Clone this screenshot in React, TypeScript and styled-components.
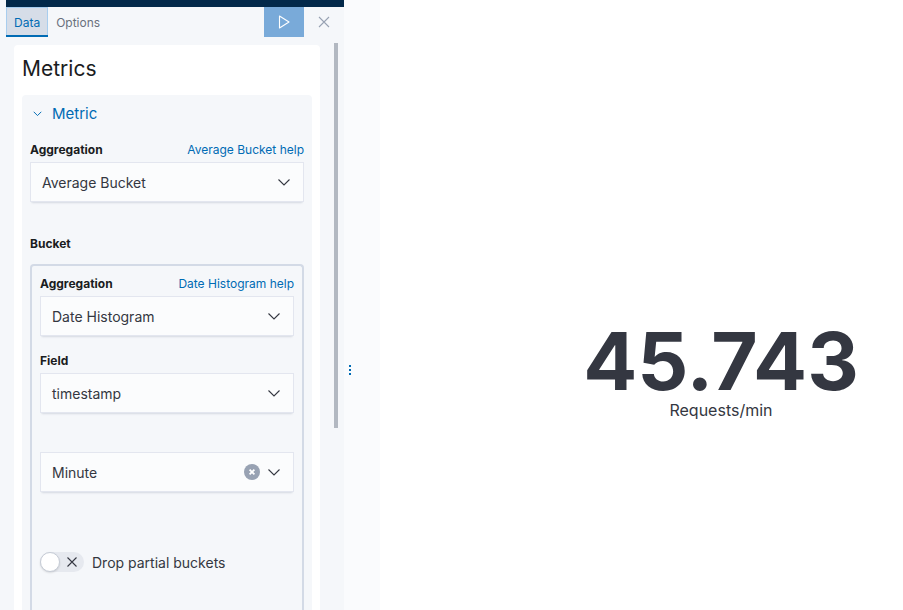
import React from 'react'
import styled, { createGlobalStyle } from 'styled-components'

const GlobalStyle = createGlobalStyle`
  html, body { margin: 0; padding: 0; }
  body { font-family: Inter, "Noto Sans", "Liberation Sans", sans-serif; color: #343741; background: #f5f7fa; }
  * { box-sizing: border-box; }
`

const Page = styled.div`
  display: flex;
  width: 903px;
  height: 610px;
  overflow: hidden;
  background: #f5f7fa;
`

const Sidebar = styled.div`
  display: flex;
  flex-direction: column;
  width: 338px;
  margin-left: 6px;
  flex-shrink: 0;
  overflow: hidden;
`

const TopBar = styled.div`
  height: 7px;
  flex-shrink: 0;
  background: #03294a;
`

const TabRow = styled.div`
  display: flex;
  align-items: stretch;
  height: 30px;
  flex-shrink: 0;
`

const Tab = styled.div<{ $active?: boolean }>`
  display: flex;
  align-items: center;
  padding: 0 8px;
  font-size: 12px;
  color: ${p => (p.$active ? '#006bb4' : '#69707d')};
  background: ${p => (p.$active ? '#d6dde8' : 'transparent')};
  box-shadow: ${p => (p.$active ? 'inset 0 -2px 0 #006bb4, inset 0 0 0 1px #a8cdee' : 'none')};
`

const PlayButton = styled.div`
  margin-left: auto;
  width: 40px;
  display: flex;
  align-items: center;
  justify-content: center;
  background: #79aad9;
`

const CloseButton = styled.div`
  width: 40px;
  display: flex;
  align-items: center;
  justify-content: center;
`

const Body = styled.div`
  display: flex;
  flex-shrink: 0;
  padding-top: 6px;
`

const Card = styled.div`
  width: 306px;
  margin: 2px 0 0 8px;
  padding: 10px 8px 0;
  background: #fff;
  border-radius: 4px 4px 0 0;
`

const ScrollGutter = styled.div`
  width: 24px;
  padding-left: 14px;
`

const ScrollThumb = styled.div`
  width: 4px;
  height: 385px;
  background: #b2b8c1;
`

const Title = styled.h2`
  margin: 0;
  font-size: 21px;
  line-height: 28px;
  font-weight: 400;
  color: #1a1c21;
`

const Section = styled.div`
  margin-top: 12px;
  padding: 0 8px 40px;
  background: #f5f7fa;
  border-radius: 4px 4px 0 0;
`

const AccordionHeader = styled.div`
  display: flex;
  align-items: center;
  gap: 9px;
  height: 36px;
  padding-left: 2px;
  font-size: 15px;
  color: #006bb4;
`

const FormRow = styled.div<{ $top: number }>`
  margin-top: ${p => p.$top}px;
`

const LabelRow = styled.div`
  display: flex;
  justify-content: space-between;
  align-items: center;
  height: 16px;
  margin-bottom: 5px;
`

const Label = styled.span`
  font-size: 12px;
  font-weight: 700;
  color: #1a1c21;
`

const HelpLink = styled.span`
  font-size: 12px;
  color: #006bb4;
`

const Select = styled.div`
  display: flex;
  align-items: center;
  gap: 6px;
  height: 40px;
  padding: 0 12px;
  background: #fbfcfd;
  font-size: 14px;
  color: #343741;
  box-shadow: 0 1px 1px -1px rgba(152, 162, 179, 0.3), 0 3px 2px -2px rgba(152, 162, 179, 0.3),
    inset 0 0 0 1px rgba(15, 39, 118, 0.1);
`

const SelectValue = styled.span`
  flex: 1;
`

const BucketBox = styled.div`
  margin-top: 13px;
  padding: 9px 8px 80px;
  border: 2px solid #d3dae6;
  border-bottom: none;
  border-radius: 4px 4px 0 0;
`

const ToggleRow = styled.div`
  display: flex;
  align-items: center;
  gap: 8px;
  margin-top: 60px;
  font-size: 14px;
  color: #343741;
`

const Track = styled.div`
  position: relative;
  width: 44px;
  height: 20px;
  border-radius: 10px;
  background: #e6e9ef;
  display: flex;
  align-items: center;
  justify-content: flex-end;
  padding-right: 6px;
`

const Knob = styled.div`
  position: absolute;
  left: 0;
  top: 0;
  width: 20px;
  height: 20px;
  border-radius: 50%;
  background: #fff;
  border: 1px solid #c6ccd6;
  box-shadow: 0 1px 2px rgba(0, 0, 0, 0.12);
`

const Handle = styled.div`
  width: 36px;
  flex-shrink: 0;
  background: #fafbfd;
  display: flex;
  flex-direction: column;
  align-items: flex-start;
  padding: 365px 0 0 5px;
  gap: 2px;
`

const Dot = styled.div`
  width: 2px;
  height: 2px;
  background: #006bb4;
`

const Vis = styled.div`
  flex: 1;
  background: #fff;
  display: flex;
  flex-direction: column;
  align-items: center;
  padding: 325px 0 0 159px;
`

const BigValue = styled.div`
  font-size: 80px;
  line-height: 72px;
  font-weight: 700;
  color: #343741;
`

const ValueLabel = styled.div`
  margin-top: 3px;
  font-size: 16px;
  line-height: 20px;
  color: #343741;
`

const ChevronDown = ({ color = '#343741', size = 16 }: { color?: string; size?: number }) => (
  <svg width={size} height={size} viewBox="0 0 16 16" fill="none">
    <polyline points="2.5,5.5 8,11 13.5,5.5" stroke={color} strokeWidth={size < 14 ? 1.4 : 1.1} />
  </svg>
)

const ClearIcon = () => (
  <svg width="16" height="16" viewBox="0 0 16 16">
    <circle cx="8" cy="8" r="8" fill="#98a2b3" />
    <path d="M5.6 5.6 L10.4 10.4 M10.4 5.6 L5.6 10.4" stroke="#fff" strokeWidth="1.8" />
  </svg>
)

function App() {
  return (
    <Page>
      <GlobalStyle />
      <Sidebar>
        <TopBar />
        <TabRow>
          <Tab $active>Data</Tab>
          <Tab>Options</Tab>
          <PlayButton>
            <svg width="16" height="16" viewBox="0 0 16 16" fill="none">
              <path d="M3.5 2 L13 8 L3.5 14 Z" stroke="#fff" strokeWidth="1.1" strokeLinejoin="round" />
            </svg>
          </PlayButton>
          <CloseButton>
            <svg width="12" height="12" viewBox="0 0 12 12" fill="none">
              <path d="M1 1 L11 11 M11 1 L1 11" stroke="#98a2b3" strokeWidth="1.1" />
            </svg>
          </CloseButton>
        </TabRow>
        <Body>
          <Card>
            <Title>Metrics</Title>
            <Section>
              <AccordionHeader>
                <ChevronDown color="#006bb4" size={11} />
                Metric
              </AccordionHeader>
              <FormRow $top={10}>
                <LabelRow>
                  <Label>Aggregation</Label>
                  <HelpLink>Average Bucket help</HelpLink>
                </LabelRow>
                <Select>
                  <SelectValue>Average Bucket</SelectValue>
                  <ChevronDown />
                </Select>
              </FormRow>
              <FormRow $top={33}>
                <LabelRow>
                  <Label>Bucket</Label>
                </LabelRow>
              </FormRow>
              <BucketBox>
                <LabelRow>
                  <Label>Aggregation</Label>
                  <HelpLink>Date Histogram help</HelpLink>
                </LabelRow>
                <Select>
                  <SelectValue>Date Histogram</SelectValue>
                  <ChevronDown />
                </Select>
                <FormRow $top={16}>
                  <LabelRow>
                    <Label>Field</Label>
                  </LabelRow>
                  <Select>
                    <SelectValue>timestamp</SelectValue>
                    <ChevronDown />
                  </Select>
                </FormRow>
                <FormRow $top={39}>
                  <Select>
                    <SelectValue>Minute</SelectValue>
                    <ClearIcon />
                    <ChevronDown />
                  </Select>
                </FormRow>
                <ToggleRow>
                  <Track>
                    <Knob />
                    <svg width="12" height="12" viewBox="0 0 12 12" fill="none">
                      <path d="M1.5 1.5 L10.5 10.5 M10.5 1.5 L1.5 10.5" stroke="#343741" strokeWidth="1.1" />
                    </svg>
                  </Track>
                  Drop partial buckets
                </ToggleRow>
              </BucketBox>
            </Section>
          </Card>
          <ScrollGutter>
            <ScrollThumb />
          </ScrollGutter>
        </Body>
      </Sidebar>
      <Handle>
        <Dot />
        <Dot />
        <Dot />
      </Handle>
      <Vis>
        <BigValue>45.743</BigValue>
        <ValueLabel>Requests/min</ValueLabel>
      </Vis>
    </Page>
  )
}

export default App
